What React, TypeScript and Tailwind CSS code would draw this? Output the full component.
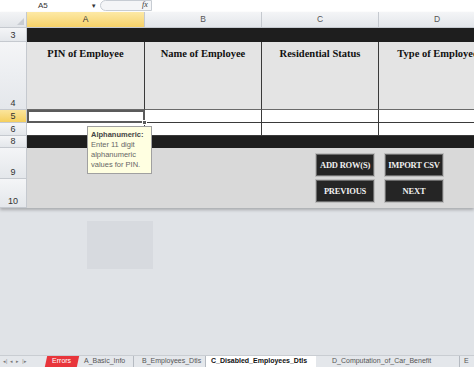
import React from 'react';

const serif = { fontFamily: '"Liberation Serif", "DejaVu Serif", serif' };
const sans = { fontFamily: '"Liberation Sans", Arial, sans-serif' };

const columns = ['A', 'B', 'C', 'D'];
const headers = ['PIN of Employee', 'Name of Employee', 'Residential Status', 'Type of Employee'];

const RowNum = ({ n, className = '', active = false }: { n: string; className?: string; active?: boolean }) => (
  <div
    className={`flex items-end justify-center pb-[1px] border-b border-r border-[#c5c9cf] text-[9px] leading-none text-[#333] ${
      active ? 'bg-gradient-to-b from-[#fbe59c] to-[#f5cf5c]' : 'bg-gradient-to-b from-[#f4f5f7] to-[#e4e7eb]'
    } ${className}`}
    style={sans}
  >
    {n}
  </div>
);

const ActionButton = ({ label }: { label: string }) => (
  <button
    className="w-[58px] h-[22px] bg-[#252525] text-[#f0f0f0] text-[8.5px] font-bold tracking-tight border border-[#6a6a6a] shadow-[0_0_0_1px_#bdbdbd]"
    style={serif}
  >
    {label}
  </button>
);

export default function App() {
  return (
    <div className="w-[474px] h-[367px] overflow-hidden bg-[#e0e3e7] flex flex-col relative">
      {/* formula bar */}
      <div className="h-[12px] bg-white flex items-center text-[8px] text-[#333]" style={sans}>
        <span className="ml-[38px]">A5</span>
        <span className="ml-[43px] text-[6px]">▼</span>
        <div className="ml-[3px] h-[11px] w-[52px] -mt-[2px] rounded-l-full border border-[#c7ccd3] bg-[#f4f5f7] flex items-center justify-end pr-[3px]">
          <span className="italic text-[8px]" style={serif}>fx</span>
        </div>
      </div>

      {/* sheet grid - column D runs past the window edge */}
      <div className="overflow-hidden shadow-[0_2px_3px_rgba(0,0,0,0.25)]">
        <div className="w-[496px] grid grid-cols-[27px_118px_117px_117px_117px] grid-rows-[16px_14px_68px_13px_13px_12px_31px_29px]">
          {/* column letters */}
          <div className="bg-gradient-to-b from-[#f3f4f6] to-[#e2e5e9] border-b border-r border-[#c5c9cf] relative">
            <div className="absolute right-[2px] bottom-[2px] w-0 h-0 border-l-[7px] border-l-transparent border-b-[7px] border-b-[#c8ccd2]" />
          </div>
          {columns.map((c, i) => (
            <div
              key={c}
              className={`flex items-center justify-center text-[8.5px] border-b border-r border-[#c5c9cf] ${
                i === 0 ? 'bg-gradient-to-b from-[#fde9a6] to-[#f6d267] text-[#333]' : 'bg-gradient-to-b from-[#f4f5f7] to-[#e3e6ea] text-[#555]'
              }`}
              style={sans}
            >
              {c}
            </div>
          ))}

          {/* row 3 */}
          <RowNum n="3" />
          <div className="col-span-4 bg-[#1e1e1e]" />

          {/* row 4 */}
          <RowNum n="4" />
          {headers.map((h, i) => (
            <div
              key={h}
              className={`bg-[#e4e4e4] pt-[4px] text-center text-[10.5px] font-bold text-[#111] whitespace-nowrap overflow-hidden border-b border-[#6a6a6a] ${
                i < 3 ? 'border-r border-r-[#3a3a3a]' : ''
              }`}
              style={serif}
            >
              {h}
            </div>
          ))}

          {/* row 5 */}
          <RowNum n="5" active />
          <div className="bg-white border-2 border-[#5b5b5b] relative">
            <div className="absolute -right-[4px] -bottom-[4px] w-[5px] h-[5px] bg-[#5b5b5b] border border-white" />
          </div>
          <div className="bg-white border-r border-b border-[#3a3a3a]" />
          <div className="bg-white border-r border-b border-[#3a3a3a]" />
          <div className="bg-white border-b border-[#3a3a3a]" />

          {/* row 6 */}
          <RowNum n="6" />
          <div className="bg-white border-r border-b border-[#3a3a3a]" />
          <div className="bg-white border-r border-b border-[#3a3a3a]" />
          <div className="bg-white border-r border-b border-[#3a3a3a]" />
          <div className="bg-white border-b border-[#3a3a3a]" />

          {/* row 8 */}
          <RowNum n="8" />
          <div className="col-span-4 bg-[#1e1e1e]" />

          {/* rows 9-10 */}
          <RowNum n="9" />
          <div className="col-span-4 row-span-2 bg-[#d9d9d9] pl-[289px] pt-[6px] grid grid-cols-[58px_58px] grid-rows-[22px_22px] gap-x-[11px] gap-y-[4px]">
            <ActionButton label="ADD ROW(S)" />
            <ActionButton label="IMPORT CSV" />
            <ActionButton label="PREVIOUS" />
            <ActionButton label="NEXT" />
          </div>
          <RowNum n="10" />
        </div>
      </div>

      {/* empty app area */}
      <div className="flex-1 relative">
        <div className="absolute left-[87px] top-[13px] w-[66px] h-[48px] bg-[#d7dadf]" />
      </div>

      {/* sheet tabs */}
      <div className="h-[12px] flex items-end text-[7px] text-[#555] border-t border-[#c9cdd2] bg-[#e4e7eb] whitespace-nowrap" style={sans}>
        <div className="w-[40px] pl-[3px] flex gap-[3px] items-center text-[5px] text-[#777] self-center">
          <span>◂|</span><span>◂</span><span>▸</span><span>|▸</span>
        </div>
        <div className="ml-[6px] h-[11px] w-[32px] bg-[#e8353b] text-white -skew-x-12 flex items-center justify-center">
          <span className="skew-x-12">Errors</span>
        </div>
        <div className="h-[11px] w-[56px] pl-[6px] flex items-center border-r border-[#b5bac1]">A_Basic_Info</div>
        <div className="h-[11px] w-[72px] pl-[8px] flex items-center border-r border-[#b5bac1]">B_Employees_Dtls</div>
        <div className="h-[11px] w-[110px] pl-[5px] bg-white font-bold text-[#111] flex items-center">C_Disabled_Employees_Dtls</div>
        <div className="h-[11px] w-[144px] pl-[16px] flex items-center border-r border-[#b5bac1]">D_Computation_of_Car_Benefit</div>
        <div className="h-[11px] pl-[4px] flex items-center">E</div>
      </div>

      {/* data validation tooltip */}
      <div
        className="absolute left-[87px] top-[126px] w-[65px] h-[48px] bg-[#ffffe1] border border-[#a0a0a0] px-[3px] pt-[3px] text-[7.5px] leading-[10px] text-[#666]"
        style={sans}
      >
        <div className="font-bold text-[#444]">Alphanumeric:</div>
        <div>Enter 11 digit</div>
        <div>alphanumeric</div>
        <div>values for PIN.</div>
      </div>
    </div>
  );
}
